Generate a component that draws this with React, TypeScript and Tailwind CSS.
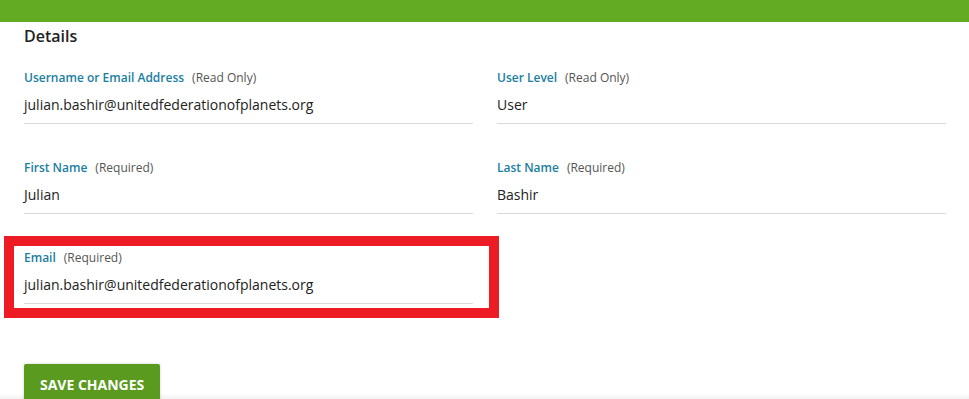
import React from "react";

function Field({
  label,
  note,
  value,
  highlight,
}: {
  label: string;
  note: string;
  value: string;
  highlight?: boolean;
}) {
  return (
    <div className="relative">
      {highlight && (
        <div className="absolute -left-[20px] -right-[26px] -top-[13px] -bottom-[14px] border-[10px] border-[#ed1c24] pointer-events-none" />
      )}
      <div className="flex items-baseline h-[18px] leading-[18px]">
        <span className="text-[12px] font-semibold text-[#1a7ea1]">{label}</span>
        <span className="ml-[8px] text-[12px] font-medium text-[#555555]">{note}</span>
      </div>
      <div className="mt-[8px] h-[20px] leading-[20px] text-[14px] text-[#222222]">{value}</div>
      <div className="mt-[8px] h-px bg-[#d9d9d9]" />
    </div>
  );
}

export default function App() {
  return (
    <div
      className="h-[399px] overflow-hidden bg-[linear-gradient(to_bottom,#ffffff_393px,#f2f2f2_399px)]"
      style={{ fontFamily: '"Open Sans", "Noto Sans", sans-serif' }}
    >
      <div className="h-[22px] bg-[#63ab22]" />
      <div className="pl-[24px] pr-[23px]">
        <h2 className="mt-[2px] h-[24px] leading-[24px] text-[16px] font-semibold text-[#222222]">Details</h2>
        <div className="mt-[21px] grid grid-cols-2 gap-x-[24px] gap-y-[35px]">
          <Field
            label="Username or Email Address"
            note="(Read Only)"
            value="julian.bashir@unitedfederationofplanets.org"
          />
          <Field label="User Level" note="(Read Only)" value="User" />
          <Field label="First Name" note="(Required)" value="Julian" />
          <Field label="Last Name" note="(Required)" value="Bashir" />
          <Field
            label="Email"
            note="(Required)"
            value="julian.bashir@unitedfederationofplanets.org"
            highlight
          />
        </div>
        <button className="mt-[60px] h-[40px] px-[16px] bg-[#5a9a1f] text-white text-[14px] font-bold uppercase rounded-t-[2px] shadow-[0_0_3px_rgba(0,0,0,0.2)]">
          Save Changes
        </button>
      </div>
    </div>
  );
}
